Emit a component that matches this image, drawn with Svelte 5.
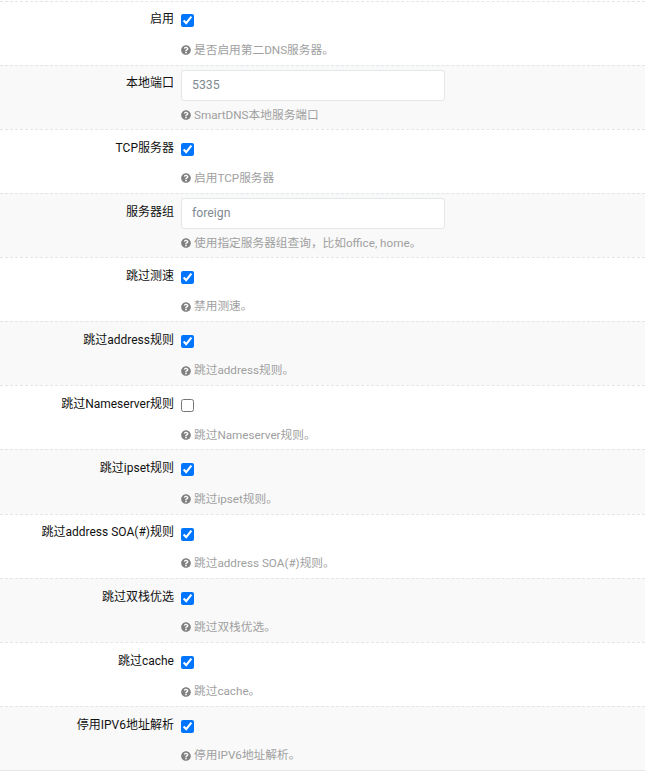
<script>
  const rows = [
    { label: "启用", check: true, help: "是否启用第二DNS服务器。" },
    { label: "本地端口", value: "5335", help: "SmartDNS本地服务端口" },
    { label: "TCP服务器", check: true, help: "启用TCP服务器" },
    { label: "服务器组", value: "foreign", help: "使用指定服务器组查询，比如office, home。" },
    { label: "跳过测速", check: true, help: "禁用测速。" },
    { label: "跳过address规则", check: true, help: "跳过address规则。" },
    { label: "跳过Nameserver规则", check: false, help: "跳过Nameserver规则。" },
    { label: "跳过ipset规则", check: true, help: "跳过ipset规则。" },
    { label: "跳过address SOA(#)规则", check: true, help: "跳过address SOA(#)规则。" },
    { label: "跳过双栈优选", check: true, help: "跳过双栈优选。" },
    { label: "跳过cache", check: true, help: "跳过cache。" },
    { label: "停用IPV6地址解析", check: true, help: "停用IPV6地址解析。" }
  ];
</script>

<div class="section">
  {#each rows as row, i}
    <div class="row" class:odd={i % 2 === 1}>
      <div class="label">{row.label}</div>
      <div class="field">
        {#if row.value}
          <input class="text" type="text" value={row.value} />
        {:else}
          <div class="check"><input type="checkbox" checked={row.check} /></div>
        {/if}
        <div class="help">
          <svg viewBox="0 0 512 512" width="10" height="10">
            <path fill="#808080" d="M504 256c0 136.997-111.043 248-248 248S8 392.997 8 256C8 119.083 119.043 8 256 8s248 111.083 248 248zM262.655 90c-54.497 0-89.255 22.957-116.549 63.758-3.536 5.286-2.353 12.415 2.715 16.258l34.699 26.31c5.205 3.947 12.621 3.008 16.665-2.122 17.864-22.658 30.113-35.797 57.303-35.797 20.429 0 45.698 13.148 45.698 32.958 0 14.976-12.363 22.667-32.534 33.976C247.128 238.528 216 254.941 216 296v4c0 6.627 5.373 12 12 12h56c6.627 0 12-5.373 12-12v-1.333c0-28.462 83.186-29.647 83.186-106.667 0-58.002-60.165-102-116.531-102zM256 338c-25.365 0-46 20.635-46 46 0 25.364 20.635 46 46 46s46-20.636 46-46c0-25.365-20.635-46-46-46z"/>
          </svg>
          <span>{row.help}</span>
        </div>
      </div>
    </div>
  {/each}
</div>

<style>
  :global(body) {
    margin: 0;
    background: #fff;
    font-family: Roboto, "Noto Sans CJK SC", sans-serif;
  }
  .section {
    border-bottom: 1px solid #e3e8ea;
    padding-top: 0.5px;
  }
  .row {
    display: flex;
    height: 63.15px;
    border-top: 1px dashed #e2e6e8;
  }
  .row.odd {
    background: #f9f9f9;
  }
  .label {
    width: 174px;
    padding-top: 9.8px;
    text-align: right;
    font-size: 12px;
    line-height: 17px;
    color: #111;
    white-space: nowrap;
  }
  .field {
    margin-left: 7px;
    display: flex;
    flex-direction: column;
  }
  .text {
    box-sizing: border-box;
    width: 264px;
    height: 31px;
    margin-top: 4px;
    padding: 0 10px;
    border: 1px solid #e2e7ea;
    border-radius: 3px;
    background: #fff;
    font: 12.25px Roboto, sans-serif;
    color: #808a92;
    outline: none;
  }
  .check {
    height: 35.2px;
  }
  .check input {
    display: block;
    width: 13px;
    height: 13px;
    margin: 12.9px 0 0;
    accent-color: #0075ff;
  }
  .help {
    display: flex;
    align-items: center;
    gap: 3px;
    margin-top: 5px;
    font-size: 11.7px;
    line-height: 17px;
    color: #a0a0a0;
    white-space: nowrap;
  }
  .text + .help {
    margin-top: 6px;
  }
</style>
